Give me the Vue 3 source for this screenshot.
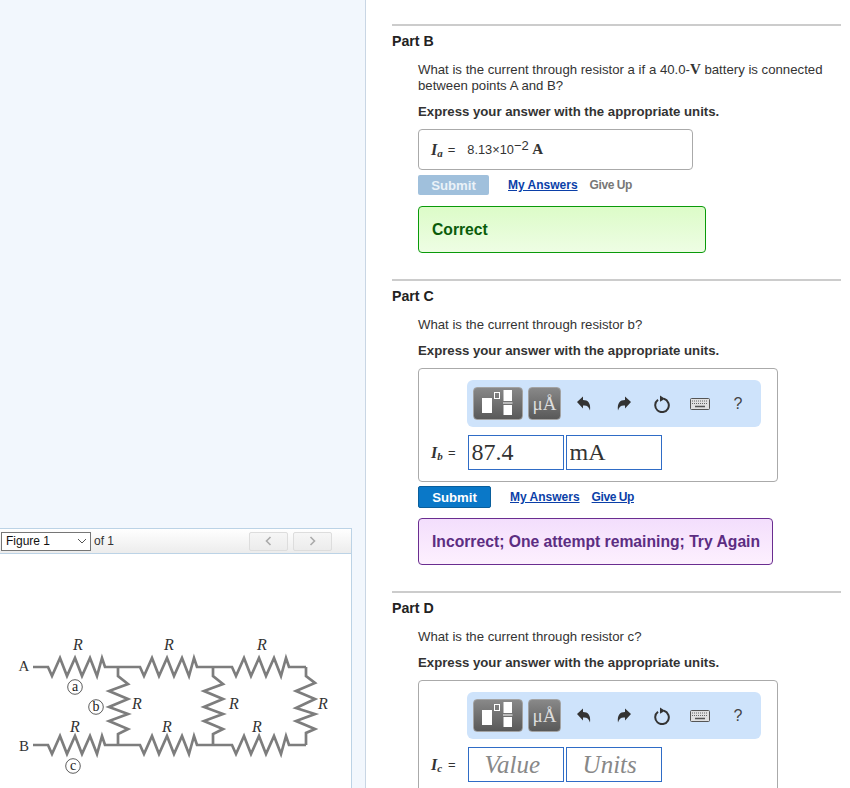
<script setup>
const zig = (x0, y, h) => {
  const xs = [4, 12, 19, 27, 34, 42, 49, 54, 57]
  return xs.map((d, i) => `${x0 + d},${i === 8 ? y : i % 2 === 0 ? y + h : y - h}`).join(' ')
}
const vert = (x, top, bottom) =>
  `${x},${top} ${x},675 ${x + 10},683 ${x - 9},690 ${x + 10},698 ${x - 9},706 ${x + 10},713 ${x - 9},720 ${x + 10},728 ${x},733 ${x},${bottom}`
const wires = [
  `33,666 48,666 ${zig(48, 666, 9)} 140,666 ${zig(140, 666, 9)} 232,666 ${zig(232, 666, 9)} 306,666`,
  `33,744 48,744 ${zig(48, 744, 9)} 140,744 ${zig(140, 744, 9)} 232,744 ${zig(232, 744, 9)} 306,744`,
  vert(118, 666, 744),
  vert(213, 666, 744),
  `306,666 306,675 315,682 296,690 315,698 296,707 315,713 296,720 315,728 306,732 306,744`
]
const rLabels = [
  [78, 649], [169, 649], [262, 649],
  [137, 708], [234, 708], [323, 708],
  [75, 731], [167, 731], [257, 731]
]
const nodes = [
  ['a', 75, 686],
  ['b', 96, 706],
  ['c', 73, 765]
]
</script>

<template>
  <div class="page">
    <aside class="side">
      <div class="panel">
        <div class="figbar">
          <div class="figselect">
            <span>Figure 1</span>
            <svg width="10" height="6" viewBox="0 0 10 6"><path d="M1 1l4 4 4-4" fill="none" stroke="#555" stroke-width="1" /></svg>
          </div>
          <span class="ofone">of 1</span>
          <div class="navs">
            <button class="nav"><svg width="7" height="10" viewBox="0 0 7 10"><path d="M5.500 1L1.500 5l4 4" fill="none" stroke="#aaa" stroke-width="1.600" /></svg></button>
            <button class="nav"><svg width="7" height="10" viewBox="0 0 7 10"><path d="M1.500 1l4 4-4 4" fill="none" stroke="#aaa" stroke-width="1.600" /></svg></button>
          </div>
        </div>
        <svg class="circuit" width="351" height="235" viewBox="0 553 351 235">
          <polyline v-for="(w, i) in wires" :key="i" :points="w" fill="none" stroke="#7d7d7d" stroke-width="2.700" stroke-linejoin="miter" />
          <text v-for="(r, i) in rLabels" :key="'r' + i" :x="r[0]" :y="r[1]" class="rlabel" text-anchor="middle">R</text>
          <text x="24" y="670" class="pt" text-anchor="middle">A</text>
          <text x="24" y="750" class="pt" text-anchor="middle">B</text>
          <g v-for="n in nodes" :key="n[0]">
            <circle :cx="n[1]" :cy="n[2]" r="7.300" fill="#fff" stroke="#333" stroke-width="0.800" />
            <text :x="n[1]" :y="n[2] + 4" class="node" text-anchor="middle">{{ n[0] }}</text>
          </g>
        </svg>
      </div>
    </aside>

    <main class="main">
      <section class="part partb">
        <h3>Part B</h3>
        <p class="q">What is the current through resistor a if a 40.0-<b class="unit">V</b> battery is connected<br />between points A and B?</p>
        <p class="express">Express your answer with the appropriate units.</p>
        <div class="box done">
          <span class="sym"><i>I</i><sub>a</sub></span><span class="eq">=</span>
          <span class="val">8.13×10<sup>−2</sup> <b class="unit">A</b></span>
        </div>
        <div class="actions first">
          <button class="submit off">Submit</button>
          <a class="lnk">My Answers</a>
          <span class="giveup">Give Up</span>
        </div>
        <div class="fb ok">Correct</div>
      </section>

      <section class="part partc">
        <h3>Part C</h3>
        <p class="q">What is the current through resistor b?</p>
        <p class="express">Express your answer with the appropriate units.</p>
        <div class="box work">
          <div class="tools">
            <button class="tb tpl">
              <svg width="49" height="33" viewBox="0 0 49 33">
                <rect x="8" y="11" width="10" height="15" fill="#fff" />
                <rect x="20.500" y="5.500" width="5" height="6" fill="none" stroke="#fff" />
                <rect x="29.500" y="3" width="8.500" height="11" fill="#fff" />
                <rect x="29" y="15.500" width="9.500" height="1" fill="#fff" />
                <rect x="29.500" y="18" width="8.500" height="10" fill="#fff" />
              </svg>
            </button>
            <button class="tb mu"><span>μÅ</span></button>
            <div class="tico first-ico">
              <svg width="16" height="16" viewBox="0 0 16 16"><path d="M1 6l6-5.500v3.500c5 0 8 3 7 10.500-1-3.500-3-5.500-7-5v3z" fill="#333" /></svg>
            </div>
            <div class="tico second-ico">
              <svg width="16" height="16" viewBox="0 0 16 16"><path d="M15 6L9 0.500v3.500C4 4 1 7 2 14.500c1-3.500 3-5.500 7-5v3z" fill="#333" /></svg>
            </div>
            <div class="tico">
              <svg width="18" height="18" viewBox="0 0 18 18"><path d="M11 3.800A6.800 6.800 0 1 1 5 4.800" fill="none" stroke="#333" stroke-width="2" /><path d="M7 0.500l5 3.300-5 3z" fill="#333" /></svg>
            </div>
            <div class="tico">
              <svg width="20" height="12" viewBox="0 0 20 12"><rect x="0.500" y="0.500" width="19" height="11" rx="1" fill="#e0e0e0" stroke="#555" /><path d="M2 3h16M2 5.500h16" stroke="#666" stroke-dasharray="1 1" /><path d="M5 8.500h10" stroke="#555" stroke-width="1.500" /></svg>
            </div>
            <div class="tico help">?</div>
          </div>
          <div class="row">
            <span class="sym"><i>I</i><sub>b</sub></span><span class="eq">=</span>
            <input class="fld" value="87.4" readonly />
            <input class="fld" value="mA" readonly />
          </div>
        </div>
        <div class="actions">
          <button class="submit">Submit</button>
          <a class="lnk second">My Answers</a>
          <a class="lnk small">Give Up</a>
        </div>
        <div class="fb bad">Incorrect; One attempt remaining; Try Again</div>
      </section>

      <section class="part">
        <h3>Part D</h3>
        <p class="q">What is the current through resistor c?</p>
        <p class="express">Express your answer with the appropriate units.</p>
        <div class="box work">
          <div class="tools">
            <button class="tb tpl">
              <svg width="49" height="33" viewBox="0 0 49 33">
                <rect x="8" y="11" width="10" height="15" fill="#fff" />
                <rect x="20.500" y="5.500" width="5" height="6" fill="none" stroke="#fff" />
                <rect x="29.500" y="3" width="8.500" height="11" fill="#fff" />
                <rect x="29" y="15.500" width="9.500" height="1" fill="#fff" />
                <rect x="29.500" y="18" width="8.500" height="10" fill="#fff" />
              </svg>
            </button>
            <button class="tb mu"><span>μÅ</span></button>
            <div class="tico first-ico">
              <svg width="16" height="16" viewBox="0 0 16 16"><path d="M1 6l6-5.500v3.500c5 0 8 3 7 10.500-1-3.500-3-5.500-7-5v3z" fill="#333" /></svg>
            </div>
            <div class="tico second-ico">
              <svg width="16" height="16" viewBox="0 0 16 16"><path d="M15 6L9 0.500v3.500C4 4 1 7 2 14.500c1-3.500 3-5.500 7-5v3z" fill="#333" /></svg>
            </div>
            <div class="tico">
              <svg width="18" height="18" viewBox="0 0 18 18"><path d="M11 3.800A6.800 6.800 0 1 1 5 4.800" fill="none" stroke="#333" stroke-width="2" /><path d="M7 0.500l5 3.300-5 3z" fill="#333" /></svg>
            </div>
            <div class="tico">
              <svg width="20" height="12" viewBox="0 0 20 12"><rect x="0.500" y="0.500" width="19" height="11" rx="1" fill="#e0e0e0" stroke="#555" /><path d="M2 3h16M2 5.500h16" stroke="#666" stroke-dasharray="1 1" /><path d="M5 8.500h10" stroke="#555" stroke-width="1.500" /></svg>
            </div>
            <div class="tico help">?</div>
          </div>
          <div class="row">
            <span class="sym"><i>I</i><sub>c</sub></span><span class="eq">=</span>
            <input class="fld empty" placeholder="Value" readonly />
            <input class="fld empty" placeholder="Units" readonly />
          </div>
        </div>
      </section>
    </main>
  </div>
</template>

<style scoped>
.page {
  display: flex;
  width: 850px;
  height: 788px;
  overflow: hidden;
  background: #fff;
  font-family: "Liberation Sans", Arial, sans-serif;
  font-size: 12px;
  color: #333;
}
.side {
  box-sizing: border-box;
  width: 366px;
  flex: none;
  padding-top: 528px;
  background: #f2f7fd;
  border-right: 1px solid #c9d6e4;
}
.panel {
  box-sizing: border-box;
  width: 352px;
  height: 260px;
  background: #fff;
  border: 1px solid #bcd3e6;
  border-left: 0;
  border-bottom: 0;
}
.figbar {
  box-sizing: border-box;
  height: 25px;
  display: flex;
  align-items: center;
  background: linear-gradient(#fff, #ececec);
  border-bottom: 1px solid #bcd3e6;
}
.figselect {
  box-sizing: border-box;
  width: 90px;
  height: 19px;
  margin-left: 1px;
  padding: 0 3px 0 4px;
  display: flex;
  align-items: center;
  justify-content: space-between;
  border: 1px solid #767676;
  background: #fff;
  color: #111;
}
.ofone { margin-left: 3px; }
.navs {
  display: flex;
  gap: 5px;
  margin-left: auto;
  margin-right: 19px;
}
.nav {
  box-sizing: border-box;
  width: 39px;
  height: 19px;
  padding: 0;
  display: flex;
  align-items: center;
  justify-content: center;
  border: 1px solid #ddd;
  border-radius: 2px;
  background: linear-gradient(#f6f6f6, #ececec);
}
.circuit { display: block; }
.rlabel {
  font: italic 16px "Liberation Serif", serif;
  fill: #333;
}
.pt {
  font: 15px "Liberation Serif", serif;
  fill: #333;
}
.node {
  font: 14px "Liberation Serif", serif;
  fill: #222;
}
.main {
  flex: 1;
  padding: 24px 9px 0 26px;
}
.part {
  box-sizing: border-box;
  border-top: 2px solid #ccc;
  padding-top: 8px;
}
.partb { height: 255px; }
.partc { height: 312px; }
h3 {
  margin: 0 0 13px;
  font-size: 14.200px;
  line-height: 15px;
  color: #222;
}
.q {
  margin: 0 0 10px 26px;
  font-size: 13.200px;
  line-height: 16px;
}
.unit {
  font-family: "Liberation Serif", serif;
  font-size: 15px;
  line-height: 0;
}
.express {
  margin: 0 0 9px 26px;
  font-size: 13.200px;
  line-height: 16px;
  font-weight: bold;
}
.box {
  box-sizing: border-box;
  margin-left: 26px;
  border: 1px solid #aaa;
  border-radius: 4px;
  background: #fff;
}
.done {
  width: 275px;
  height: 41px;
  padding: 0 12px;
  display: flex;
  align-items: center;
}
.work {
  width: 360px;
  height: 114px;
  padding: 11px 0 0 48px;
}
.sym {
  font: bold 16px "Liberation Serif", serif;
  color: #333;
}
.sym sub {
  font-size: 11px;
  font-style: italic;
  vertical-align: -2px;
  line-height: 0;
}
.eq {
  margin-left: 5px;
  font-size: 13px;
}
.val {
  margin-left: 12px;
  font-size: 12.800px;
}
.val sup {
  font-size: 13px;
  line-height: 0;
  vertical-align: 4px;
}
.tools {
  box-sizing: border-box;
  width: 294px;
  height: 47px;
  padding-left: 6px;
  display: flex;
  align-items: center;
  background: #cee3fb;
  border-radius: 6px;
}
.tb {
  box-sizing: border-box;
  height: 33px;
  padding: 0;
  border: 1px solid #a3a3a3;
  border-radius: 4px;
  background: linear-gradient(#888, #595959);
  display: flex;
  align-items: center;
  justify-content: center;
}
.tpl { width: 50px; }
.tpl svg { margin: -1px; flex: none; }
.mu {
  width: 33px;
  margin-left: 5px;
  color: #ddd;
  font: 19px "Liberation Serif", serif;
}
.tico {
  width: 38px;
  flex: none;
  display: flex;
  align-items: center;
  justify-content: center;
}
.first-ico { margin-left: 4px; }
.second-ico { margin-left: 2px; }
.help { font-size: 16px; color: #444; }
.row {
  position: relative;
  display: flex;
  align-items: center;
  gap: 2px;
  margin: 8px 0 0 -36px;
}
.row .eq { margin-right: 10px; margin-left: 0; }
.row .sym { width: 15px; }
.fld {
  box-sizing: border-box;
  width: 96px;
  height: 35px;
  padding: 0 3px;
  border: 1px solid #2f6cc6;
  border-radius: 0;
  background: #fff;
  outline: none;
  color: #333;
  font: 24px "Liberation Serif", serif;
}
.empty {
  padding-left: 16px;
  font-size: 25px;
}
.fld::placeholder {
  color: #888;
  font-style: italic;
  opacity: 1;
}
.actions {
  margin: 4px 0 0 26px;
  height: 22px;
  display: flex;
  align-items: center;
}
.first { margin-top: 5px; height: 20px; }
.submit {
  box-sizing: border-box;
  width: 73px;
  height: 22px;
  padding: 0;
  border: 1px solid #0a5f9c;
  border-radius: 2px;
  background: #0a78c8;
  color: #fff;
  font: bold 13.200px "Liberation Sans", sans-serif;
}
.off {
  width: 71px;
  height: 20px;
  border: 0;
  background: #a0c0dc;
  color: #eaf2f8;
}
.lnk {
  margin-left: 19px;
  color: #0b3fa8;
  font-weight: bold;
  text-decoration: underline;
}
.second { margin-right: -7px; }
.small { letter-spacing: -0.430px; }
.giveup {
  margin-left: 12px;
  color: #777;
  letter-spacing: -0.430px;
  font-weight: bold;
}
.fb {
  box-sizing: border-box;
  margin: 11px 0 0 26px;
  height: 47px;
  padding-left: 13px;
  display: flex;
  align-items: center;
  border-radius: 4px;
  font-size: 15.700px;
  font-weight: bold;
}
.ok {
  width: 288px;
  border: 1px solid #0a9a0a;
  background: linear-gradient(#dcfcc8, #eefde4);
  color: #0a5c0a;
}
.bad {
  margin-top: 10px;
  width: 355px;
  border: 1px solid #6a2d90;
  background: linear-gradient(#f3defc, #fdf0fe);
  color: #5c2d82;
}
</style>
